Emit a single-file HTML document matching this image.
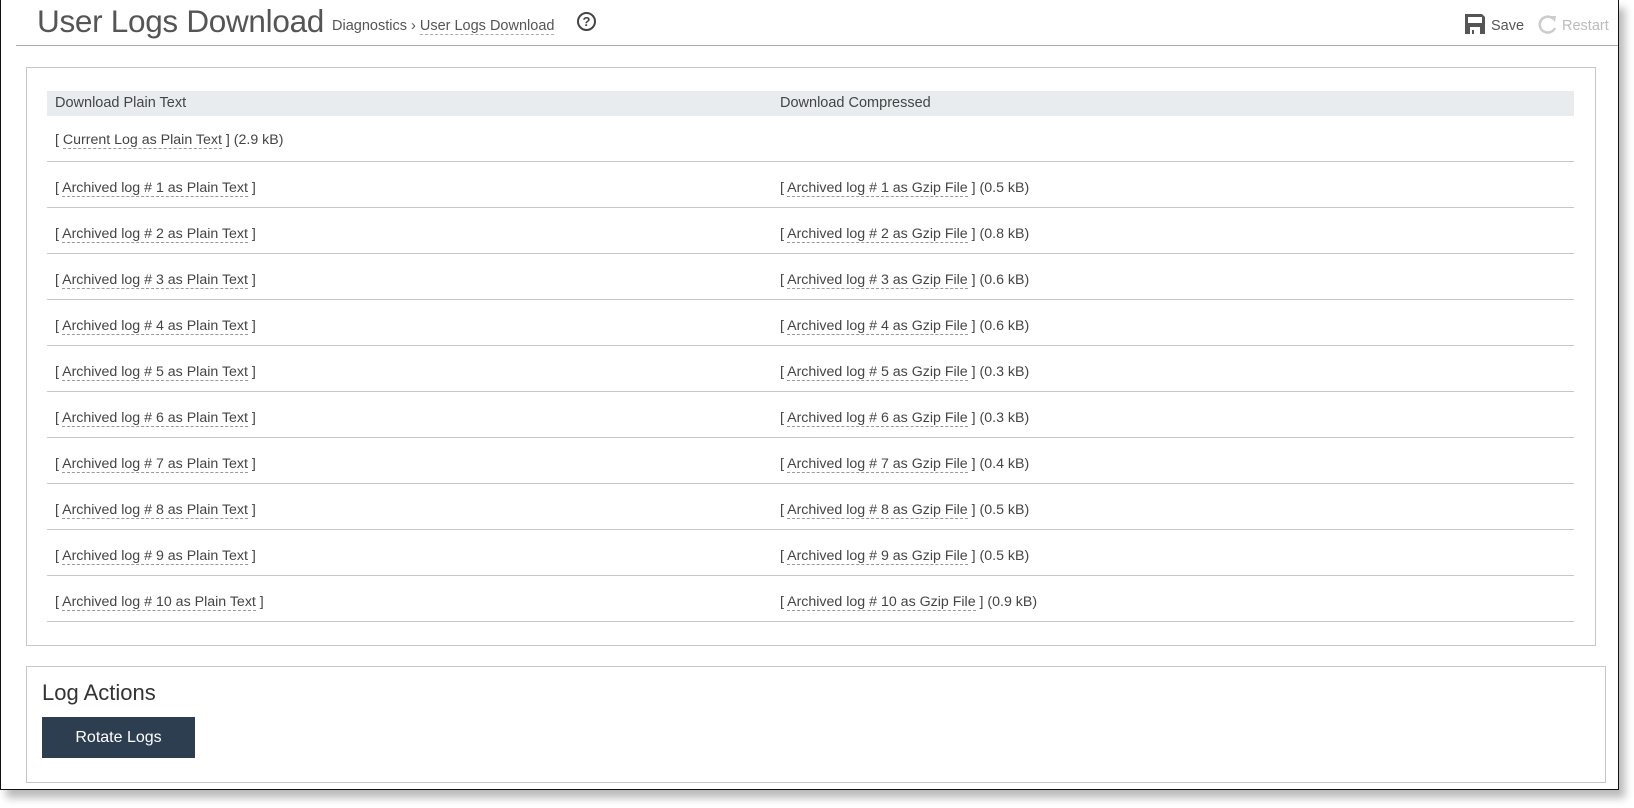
<!DOCTYPE html>
<html><head><meta charset="utf-8"><style>
*{box-sizing:border-box;margin:0;padding:0}
body{width:1634px;height:808px;background:#fff;font-family:"Liberation Sans",sans-serif;color:#444;position:relative;overflow:hidden}
#frame{position:absolute;left:0;top:0;width:1619px;height:790px;border:1.5px solid #111;border-top:none;background:#fff;box-shadow:6px 8px 8px #bbb}
.title{position:absolute;left:36px;top:3px;font-size:31.5px;color:#555;letter-spacing:-0.3px}
.crumb{position:absolute;left:331px;top:18px;font-size:14.5px;color:#555}
.crumb .cur{border-bottom:1px dashed #aaa}
.help{position:absolute;left:576px;top:12px;width:19px;height:19px;border:2px solid #444;border-radius:50%;font-size:13px;font-weight:bold;text-align:center;line-height:15px;color:#444}
.hline{position:absolute;left:15px;right:0;top:45px;border-top:1px solid #aaa}
.save{position:absolute;left:1464px;top:14px;font-size:14.5px;color:#555}
.restart{position:absolute;left:1537px;top:14px;font-size:14.5px;color:#bbb}
.box1{position:absolute;left:25px;top:67px;width:1570px;height:579px;border:1px solid #c3c7cb}
.thead{position:absolute;left:20px;top:23px;width:1527px;height:25px;background:#e9ecef;font-size:14.5px;line-height:25px}
.row{position:absolute;left:20px;width:1527px;height:46px;border-bottom:1px solid #c3c7cb;font-size:14.2px}
.c{position:absolute;top:18px;white-space:nowrap}
.c1{left:8px}.c2{left:733px}
a{color:#444;text-decoration:none;border-bottom:1px dashed #999}
.box2{position:absolute;left:25px;top:666px;width:1580px;height:117px;border:1px solid #c3c7cb}
.box2 h2{position:absolute;left:15px;top:13px;font-size:22px;font-weight:normal;color:#333}
.btn{position:absolute;left:15px;top:50px;width:153px;height:41px;background:#2d3e50;color:#fff;font-size:16px;text-align:center;line-height:41px}
</style></head><body>
<div id="frame">
<div class="title">User Logs Download</div>
<div class="crumb">Diagnostics › <span class="cur">User Logs Download</span></div>
<div class="help">?</div>
<div class="save"><svg width="20" height="20" viewBox="0 0 20 20" style="vertical-align:-4px;margin-right:6px"><path d="M0 0h17l3 3v17H0z" fill="#555"/><rect x="3" y="3" width="14" height="6" fill="#fff"/><rect x="5" y="13" width="10" height="7" fill="#fff"/><rect x="7" y="16" width="2" height="4" fill="#555"/></svg>Save</div>
<div class="restart"><svg width="20" height="20" viewBox="0 0 20 20" style="vertical-align:-4px;margin-right:4px"><path d="M15.5 5A8 8 0 1 0 17 14" fill="none" stroke="#ccc" stroke-width="2.5"/><path d="M12 2l6 0-1 6z" fill="#ccc"/></svg>Restart</div>
<div class="hline"></div>
<div class="box1">
<div class="thead"><span style="position:absolute;left:8px">Download Plain Text</span><span style="position:absolute;left:733px">Download Compressed</span></div>
<div class="row" style="top:48px"><span class="c c1" style="top:16px">[ <a>Current Log as Plain Text</a> ] (2.9 kB)</span></div>
<div class="row" style="top:94px"><span class="c c1">[ <a>Archived log # 1 as Plain Text</a> ]</span><span class="c c2">[ <a>Archived log # 1 as Gzip File</a> ] (0.5 kB)</span></div>
<div class="row" style="top:140px"><span class="c c1">[ <a>Archived log # 2 as Plain Text</a> ]</span><span class="c c2">[ <a>Archived log # 2 as Gzip File</a> ] (0.8 kB)</span></div>
<div class="row" style="top:186px"><span class="c c1">[ <a>Archived log # 3 as Plain Text</a> ]</span><span class="c c2">[ <a>Archived log # 3 as Gzip File</a> ] (0.6 kB)</span></div>
<div class="row" style="top:232px"><span class="c c1">[ <a>Archived log # 4 as Plain Text</a> ]</span><span class="c c2">[ <a>Archived log # 4 as Gzip File</a> ] (0.6 kB)</span></div>
<div class="row" style="top:278px"><span class="c c1">[ <a>Archived log # 5 as Plain Text</a> ]</span><span class="c c2">[ <a>Archived log # 5 as Gzip File</a> ] (0.3 kB)</span></div>
<div class="row" style="top:324px"><span class="c c1">[ <a>Archived log # 6 as Plain Text</a> ]</span><span class="c c2">[ <a>Archived log # 6 as Gzip File</a> ] (0.3 kB)</span></div>
<div class="row" style="top:370px"><span class="c c1">[ <a>Archived log # 7 as Plain Text</a> ]</span><span class="c c2">[ <a>Archived log # 7 as Gzip File</a> ] (0.4 kB)</span></div>
<div class="row" style="top:416px"><span class="c c1">[ <a>Archived log # 8 as Plain Text</a> ]</span><span class="c c2">[ <a>Archived log # 8 as Gzip File</a> ] (0.5 kB)</span></div>
<div class="row" style="top:462px"><span class="c c1">[ <a>Archived log # 9 as Plain Text</a> ]</span><span class="c c2">[ <a>Archived log # 9 as Gzip File</a> ] (0.5 kB)</span></div>
<div class="row" style="top:508px"><span class="c c1">[ <a>Archived log # 10 as Plain Text</a> ]</span><span class="c c2">[ <a>Archived log # 10 as Gzip File</a> ] (0.9 kB)</span></div>
</div>
<div class="box2"><h2>Log Actions</h2><div class="btn">Rotate Logs</div></div>
</div>
</body></html>
